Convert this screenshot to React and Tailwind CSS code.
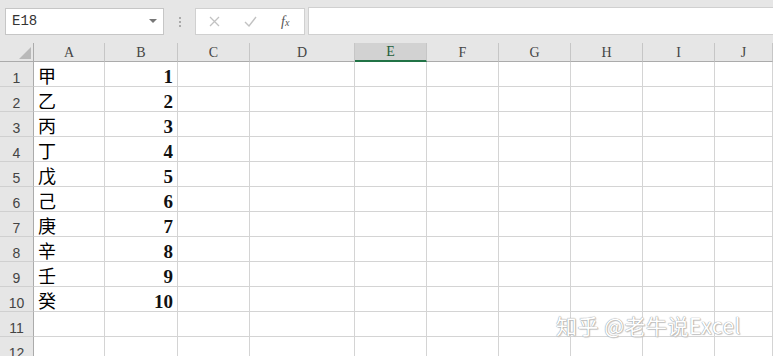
import React from "react";

const cols = [
  { label: "", w: 34 },
  { label: "A", w: 71 },
  { label: "B", w: 73 },
  { label: "C", w: 72 },
  { label: "D", w: 105 },
  { label: "E", w: 72 },
  { label: "F", w: 72 },
  { label: "G", w: 72 },
  { label: "H", w: 72 },
  { label: "I", w: 72 },
  { label: "J", w: 58 },
];

const data = ["甲", "乙", "丙", "丁", "戊", "己", "庚", "辛", "壬", "癸"];

const serif = { fontFamily: '"Liberation Serif", "Noto Sans CJK SC", serif' };
const cjk = { fontFamily: '"Noto Sans CJK SC", sans-serif' };

function FormulaBar() {
  return (
    <div className="h-[43px] flex items-start pt-[8px] pl-[5px] bg-[#e6e6e6]">
      {/* name box */}
      <div className="w-[159px] h-[27px] bg-white border border-[#c6c6c6] flex items-center justify-between pl-[6px] pr-[6px]">
        <span className="text-[14px] text-[#333]" style={{ fontFamily: '"Liberation Mono", monospace' }}>E18</span>
        <svg width="8" height="5" viewBox="0 0 8 5"><path d="M0 0 L8 0 L4 4 Z" fill="#777" /></svg>
      </div>
      <div className="w-[31px] h-[27px] flex flex-col items-center justify-center gap-[2px]">
        <span className="w-[2px] h-[2px] bg-[#aaa]" />
        <span className="w-[2px] h-[2px] bg-[#aaa]" />
        <span className="w-[2px] h-[2px] bg-[#aaa]" />
      </div>
      {/* fx box */}
      <div className="w-[110px] h-[27px] bg-white border border-[#d0d0d0] flex items-center">
        <svg className="ml-[13px]" width="11" height="11" viewBox="0 0 11 11">
          <path d="M1 1 L10 10 M10 1 L1 10" stroke="#c2c2c2" strokeWidth="1.3" />
        </svg>
        <svg className="ml-[24px]" width="13" height="11" viewBox="0 0 13 11">
          <path d="M1 6 L5 10 L12 1" stroke="#c2c2c2" strokeWidth="1.4" fill="none" />
        </svg>
        <span className="ml-[24px] italic text-[14px] text-[#555] leading-none" style={serif}>
          f<span className="text-[10px]">x</span>
        </span>
      </div>
      <div className="ml-[3px] flex-1 h-[28px] -mt-[1px] bg-white border border-r-0 border-[#d0d0d0]" />
    </div>
  );
}

function HeaderRow() {
  return (
    <div className="flex h-[19px] bg-[#e6e6e6]">
      {cols.map((c, i) => {
        if (i === 0) {
          return (
            <div key={i} className="shrink-0 border-r border-b border-[#ababab] flex items-end justify-end pr-[2px] pb-[2px]" style={{ width: c.w }}>
              <svg width="12" height="12" viewBox="0 0 12 12"><path d="M12 0 L12 12 L0 12 Z" fill="#b9b9b9" /></svg>
            </div>
          );
        }
        const active = c.label === "E";
        return (
          <div
            key={i}
            className={`shrink-0 flex items-center justify-center text-[14px] border-r border-[#c6c6c6] ${
              active ? "bg-[#d2d2d2] text-[#1e5e3a] border-b-2 border-b-[#217346]" : "text-[#444] border-b border-b-[#ababab]"
            }`}
            style={{ width: c.w, ...serif }}
          >
            {c.label}
          </div>
        );
      })}
    </div>
  );
}

function BodyRow({ n }) {
  const label = data[n - 1];
  const value = n <= 10 ? n : "";
  return (
    <div className="flex h-[25px]">
      {cols.map((c, i) => {
        if (i === 0) {
          return (
            <div
              key={i}
              className="shrink-0 bg-[#e6e6e6] border-r border-r-[#ababab] border-b border-b-[#d0d0d0] flex items-end justify-center pb-[1px] text-[14px] leading-[14px] text-[#444]"
              style={{ width: c.w, fontFamily: '"Liberation Sans", sans-serif' }}
            >
              {n}
            </div>
          );
        }
        return (
          <div
            key={i}
            className="shrink-0 bg-white border-r border-b border-[#d4d4d4] flex items-end"
            style={{ width: c.w }}
          >
            {i === 1 && label && (
              <span className="pl-[4px] text-[18px] leading-[21px] text-black" style={cjk}>{label}</span>
            )}
            {i === 2 && value !== "" && (
              <span className="ml-auto pr-[4px] text-[19px] leading-[19px] font-bold text-[#111]" style={serif}>{value}</span>
            )}
          </div>
        );
      })}
    </div>
  );
}

export default function App() {
  const rows = Array.from({ length: 12 }, (_, i) => i + 1);
  return (
    <div className="relative w-[773px] h-[356px] overflow-hidden bg-[#e6e6e6]">
      <FormulaBar />
      <HeaderRow />
      {rows.map((n) => (
        <BodyRow key={n} n={n} />
      ))}
      <div
        className="absolute left-[556px] top-[310px] text-[21px] text-white tracking-[0.5px]"
        style={{ ...cjk, textShadow: "0 0 1px #999, 0 0 1px #999, 1px 1px 1px #ccc" }}
      >
        知乎 @老牛说Excel
      </div>
    </div>
  );
}
